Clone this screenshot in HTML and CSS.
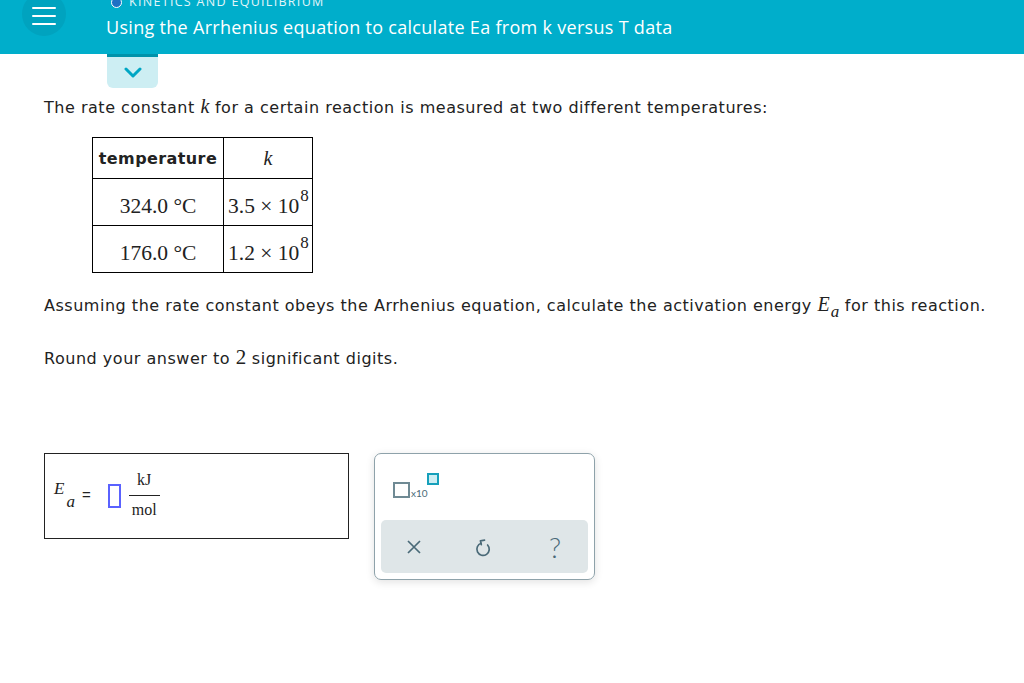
FILE: index.html
```html
<!DOCTYPE html>
<html>
<head>
<meta charset="utf-8">
<link rel="stylesheet" href="styles.css">
</head>
<body>
<header class="topbar">
  <div class="menu-btn">
    <span></span><span></span><span></span>
  </div>
  <div class="titles">
    <div class="topic"><span class="topic-dot"></span>KINETICS AND EQUILIBRIUM</div>
    <div class="title">Using the Arrhenius equation to calculate Ea from k versus T data</div>
  </div>
</header>
<div class="tab-row">
  <div class="tab">
    <svg width="18" height="12" viewBox="0 0 18 12"><path d="M2 2 L9 9 L16 2" fill="none" stroke="#00a6c4" stroke-width="3" stroke-linecap="round" stroke-linejoin="round"/></svg>
  </div>
</div>
<main class="content">
  <p class="para first">The rate constant <span class="mi">k</span> for a certain reaction is measured at two different temperatures:</p>
  <table class="data">
    <tr><th class="h-temp">temperature</th><th class="h-k"><span class="mi">k</span></th></tr>
    <tr><td class="c-temp">324.0 °C</td><td class="c-k">3.5 × 10<sup>8</sup></td></tr>
    <tr><td class="c-temp">176.0 °C</td><td class="c-k">1.2 × 10<sup>8</sup></td></tr>
  </table>
  <p class="para assume">Assuming the rate constant obeys the Arrhenius equation, calculate the activation energy <span class="mi">E</span><sub class="mi sub-a">a</sub> for this reaction.</p>
  <p class="para round">Round your answer to <span class="num">2</span> significant digits.</p>
  <div class="answer-row">
    <div class="answer-box">
      <span class="ea"><span class="mi">E</span><sub class="mi">a</sub></span>
      <span class="eq">=</span>
      <span class="blank"></span>
      <span class="frac"><span class="num-part">kJ</span><span class="den-part">mol</span></span>
    </div>
    <div class="keypad">
      <div class="sci">
        <span class="sci-box"></span><span class="sci-x">x10</span><span class="sci-exp"></span>
      </div>
      <div class="actions">
        <svg class="ic" width="18" height="18" viewBox="0 0 18 18"><path d="M3 3 L15 15 M15 3 L3 15" stroke="#4a6a78" stroke-width="1.7" fill="none"/></svg>
        <svg class="ic" width="16" height="20" viewBox="0 0 16 20"><path d="M6.2 6.3 A6.2 6.2 0 1 0 12.6 8" stroke="#4a6a78" stroke-width="1.7" fill="none" stroke-linecap="round"/><path d="M9.5 3.2 L5.4 3.8 L6.3 7.6" stroke="#4a6a78" stroke-width="1.7" fill="none" stroke-linecap="round" stroke-linejoin="round"/></svg>
        <span class="help">?</span>
      </div>
    </div>
  </div>
</main>
</body>
</html>
```
FILE: styles.css
```css
* { box-sizing: border-box; }
html, body { margin: 0; padding: 0; background: #fff; }
body { font-family: "DejaVu Sans", Verdana, sans-serif; color: #222; width: 1024px; height: 683px; overflow: hidden; }

.topbar {
  height: 54px;
  background: #00aecb;
  display: flex;
  align-items: flex-start;
}
.menu-btn {
  width: 44px; height: 44px;
  margin: -8px 0 0 22px;
  border-radius: 50%;
  background: #00a3bf;
  display: flex; flex-direction: column; align-items: center;
  gap: 6px;
  padding-top: 15px;
}
.menu-btn span { display: block; width: 24px; height: 2px; background: #fff; border-radius: 1px; }
.titles { margin-left: 40px; font-family: "Open Sans", "Lato", sans-serif; color: #fff; }
.topic {
  font-size: 12.5px; letter-spacing: 1.3px; line-height: 12px; margin-top: -4px;
  color: #e3f6fa; display: flex; align-items: center; gap: 7px;
}
.topic-dot { width: 11px; height: 11px; border-radius: 50%; background: #1e6fc4; border: 1.5px solid #fff; margin-left: 5px; }
.title { font-size: 18px; letter-spacing: 0.3px; margin-top: 7px; line-height: 24px; }

.tab-row { padding-left: 107px; }
.tab {
  width: 51px; height: 34px;
  background: #cdeef3;
  border-top: 3px solid #0092aa;
  border-radius: 0 0 6px 6px;
  display: flex; align-items: center; justify-content: center;
}

.content { padding-left: 44px; }
.para { margin: 0; font-size: 16px; line-height: 20px; letter-spacing: 0.52px; }
.first { margin-top: 8px; }
.mi { font-family: "Liberation Serif", "Times New Roman", serif; font-style: italic; font-size: 20px; letter-spacing: 0; }
.num { font-family: "Liberation Serif", serif; font-size: 21px; letter-spacing: 0; }
.sub-a { font-size: 17px; vertical-align: -6px; margin-left: 1px; }

.data {
  border-collapse: collapse;
  margin: 19px 0 0 48px;
  border: 1px solid #000;
}
.data th, .data td { border: 1px solid #000; padding: 0; }
.data .h-temp { font-family: "DejaVu Sans", sans-serif; font-weight: bold; font-size: 16px; letter-spacing: 0.4px; height: 41px; width: 131px; padding: 0; text-align: center; }
.data .h-k { width: 89px; text-align: center; font-weight: normal; }
.data .c-temp, .data .c-k {
  font-family: "Liberation Serif", serif; font-size: 21.5px; line-height: 24px;
  height: 47px; vertical-align: middle; padding: 8px 0 0 0;
}
.data .c-temp { text-align: center; }
.data .c-k { text-align: left; padding-left: 4px; white-space: nowrap; }
.c-k sup { font-size: 17px; vertical-align: 12px; line-height: 0; margin-left: 1px; }

.assume { margin-top: 21px; }
.round { margin-top: 25px; }

.answer-row { display: flex; align-items: flex-start; gap: 25px; margin-top: 84px; }
.answer-box {
  width: 305px; height: 86px;
  border: 1px solid #222;
  display: flex; align-items: center;
  padding-left: 9px;
}
.ea { display: inline-flex; align-items: flex-start; margin-top: -2px; }
.ea .mi { font-size: 17px; }
.ea sub { font-size: 12px; margin-top: 13px; margin-left: 2px; }
.eq { font-family: "Liberation Sans", sans-serif; font-size: 15px; margin-left: 7px; margin-top: -4px; }
.blank { width: 13px; height: 24px; border: 2px solid #5a62ff; margin-left: 17px; }
.frac { display: inline-flex; flex-direction: column; align-items: center; margin-left: 8px; font-family: "Liberation Serif", serif; font-size: 16px; margin-top: -3px; }
.num-part { width: 31px; text-align: center; padding-bottom: 6px; border-bottom: 1px solid #222; line-height: 18px; }
.den-part { padding-top: 5px; line-height: 18px; }

.keypad {
  width: 221px; height: 127px;
  border: 1px solid #8ea2aa;
  border-radius: 7px;
  box-shadow: 0 2px 8px rgba(0,0,0,0.12);
  padding: 19px 6px 6px 6px;
  display: flex; flex-direction: column;
}
.sci { display: flex; align-items: flex-end; height: 25px; padding-left: 12px; }
.sci-box { width: 17px; height: 16px; border: 2px solid #6f8a94; }
.sci-x { font-family: "Lato", sans-serif; font-size: 10px; color: #4a6a78; line-height: 10px; margin-left: 1px; }
.sci-exp { width: 12px; height: 12px; border: 2px solid #16a0bb; background: #cdeef3; align-self: flex-start; margin-left: -1px; }
.actions {
  margin-top: 22px;
  height: 53px;
  background: #dfe6e8;
  border-radius: 5px;
  display: flex; align-items: center;
  padding-left: 24px;
  gap: 52px;
}
.help { font-family: "Lato", sans-serif; font-size: 28px; color: #4a6a78; font-weight: 300; line-height: 28px; margin-left: 6px; }
```
